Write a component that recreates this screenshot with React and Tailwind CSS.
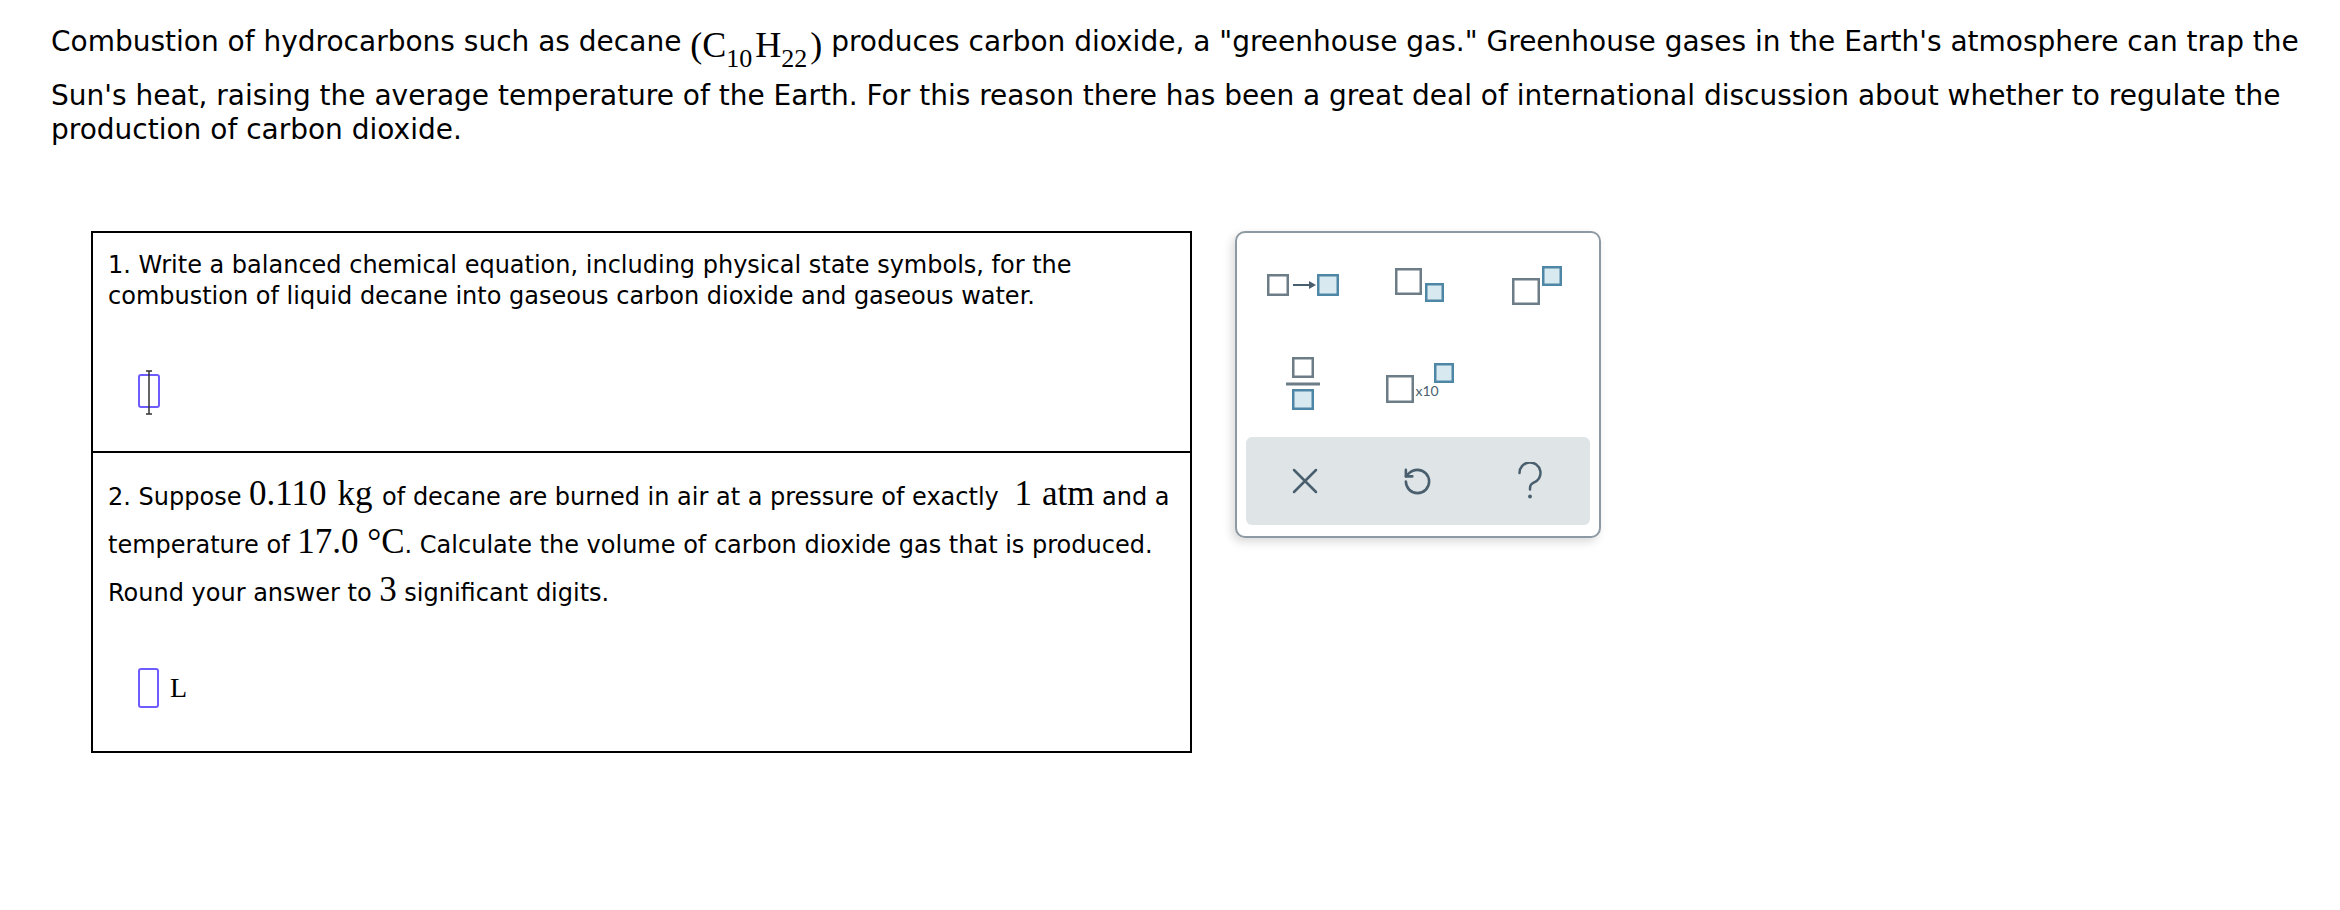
import React from "react"
import { RotateCcw } from "lucide-react"

const sans = { fontFamily: '"DejaVu Sans", Verdana, sans-serif' }

function M({ children, className = "" }) {
    return (
        <span className={"font-['Liberation_Serif',serif] text-[35px] leading-none " + className}>{children}</span>
    )
}

function Sq({ x, y, w, h, blue }) {
    return (
        <rect
            x={x + 1.25}
            y={y + 1.25}
            width={w - 2.5}
            height={h - 2.5}
            fill={blue ? "#d8e9f0" : "none"}
            stroke={blue ? "#4e86a6" : "#6c7d88"}
            strokeWidth="2.5"
        />
    )
}

function ArrowIcon() {
    return (
        <svg width="72" height="22" viewBox="0 0 72 22">
            <Sq x={0} y={0} w={22} h={22} />
            <line x1="26" y1="11" x2="43" y2="11" stroke="#4a5f6e" strokeWidth="2" />
            <path d="M42 7 L49 11 L42 15 Z" fill="#4a5f6e" />
            <Sq x={50} y={0} w={22} h={22} blue />
        </svg>
    )
}

function SubIcon() {
    return (
        <svg width="49" height="34" viewBox="0 0 49 34">
            <Sq x={0} y={0} w={27} h={27} />
            <Sq x={30} y={15} w={19} h={19} blue />
        </svg>
    )
}

function SupIcon() {
    return (
        <svg width="50" height="39" viewBox="0 0 50 39">
            <Sq x={0} y={12} w={28} h={27} />
            <Sq x={30} y={0} w={20} h={20} blue />
        </svg>
    )
}

function FracIcon() {
    return (
        <svg width="34" height="53" viewBox="0 0 34 53">
            <Sq x={6} y={0} w={22} h={21} />
            <line x1="0" y1="27" x2="34" y2="27" stroke="#6c7d88" strokeWidth="3" />
            <Sq x={6} y={32} w={22} h={21} blue />
        </svg>
    )
}

function SciIcon() {
    return (
        <div className="relative w-[68px] h-[40px]">
            <svg width="68" height="40" viewBox="0 0 68 40">
                <Sq x={0} y={12} w={28} h={28} />
                <Sq x={48} y={0} w={20} h={20} blue />
            </svg>
            <span className="absolute left-[30px] top-[21px] text-[14px] leading-none text-[#4a5f6e] font-['Lato',sans-serif]">
                x10
            </span>
        </div>
    )
}

function CloseIcon() {
    return (
        <svg width="26" height="26" viewBox="0 0 26 26">
            <path d="M2 2 L24 24 M24 2 L2 24" stroke="#4a5f6e" strokeWidth="2.5" strokeLinecap="round" />
        </svg>
    )
}

function HelpIcon() {
    return (
        <svg width="26" height="38" viewBox="0 0 26 38">
            <path
                d="M2.5 11 A10.5 10.5 0 1 1 16 21 Q13 22.5 13 26 V27.5"
                fill="none"
                stroke="#4a5f6e"
                strokeWidth="2.5"
                strokeLinecap="round"
            />
            <circle cx="13" cy="34.5" r="1.9" fill="#4a5f6e" />
        </svg>
    )
}

function Palette() {
    return (
        <div className="ml-[43px] w-[366px] rounded-[10px] border-2 border-[#8e9aa3] bg-white pt-[3px] px-[9px] pb-[11px] shadow-[-3px_4px_10px_rgba(0,0,0,0.15)]">
            <div className="grid grid-cols-[117px_117px_117px] -ml-[2px]">
                <div className="h-[98px] flex items-center justify-center"><ArrowIcon /></div>
                <div className="h-[98px] flex items-center justify-center"><SubIcon /></div>
                <div className="h-[98px] flex items-center justify-center"><SupIcon /></div>
                <div className="h-[98px] flex items-center justify-center"><FracIcon /></div>
                <div className="h-[98px] flex items-center justify-center"><SciIcon /></div>
                <div className="h-[98px]" />
            </div>
            <div className="mt-[5px] h-[88px] rounded-[6px] bg-[#dfe4e7] grid grid-cols-3 items-center">
                <div className="flex justify-center pl-[3px]"><CloseIcon /></div>
                <div className="flex justify-center"><RotateCcw size={31} strokeWidth={2} color="#4a5f6e" /></div>
                <div className="flex justify-center pr-[6px]"><HelpIcon /></div>
            </div>
        </div>
    )
}

export default function App() {
    return (
        <div className="bg-white text-black w-[2340px] min-h-[910px] pl-[51px] pr-[10px]" style={sans}>
            <p className="pt-[25px] text-[28px] leading-[34px] whitespace-nowrap">
                Combustion of hydrocarbons such as decane{" "}
                <span className="inline-block align-[-6px] leading-[35px] pb-[16px] text-[36px] font-['Liberation_Serif',serif]">
                    (C<sub className="text-[26px] -bottom-[10px] mr-[3px]">10</sub>H<sub className="text-[26px] -bottom-[10px] mr-[3px]">22</sub>)
                </span>{" "}
                produces carbon dioxide, a "greenhouse gas." Greenhouse gases in the Earth's atmosphere can trap the
                <br />
                Sun's heat, raising the average temperature of the Earth. For this reason there has been a great deal of
                international discussion about whether to regulate the
                <br />
                production of carbon dioxide.
            </p>

            <div className="mt-[84px] flex items-start">
                <div className="ml-[40px] w-[1101px] border-2 border-black">
                    <div className="h-[218px] pl-[15px] pt-[17px] text-[24px] leading-[31px]">
                        <p className="whitespace-nowrap">
                            1. Write a balanced chemical equation, including physical state symbols, for the
                            <br />
                            combustion of liquid decane into gaseous carbon dioxide and gaseous water.
                        </p>
                        <div className="mt-[62px] ml-[30px] relative w-[22px] h-[34px] rounded-[3px] border-2 border-[#6e5cff]">
                            <svg className="absolute left-[4px] -top-[6px]" width="10" height="45" viewBox="0 0 10 45">
                                <path d="M2 1 L8 1 M5 1 L5 44 M2 44 L8 44" stroke="#333" strokeWidth="1.5" />
                            </svg>
                        </div>
                    </div>
                    <div className="border-t-2 border-black h-[300px] pl-[15px] pt-[20px] text-[24px] leading-[48px]">
                        <p className="whitespace-nowrap">
                            2. Suppose <M className="mr-[2px]">0.110<span className="ml-[11px]">kg</span></M> of decane
                            are burned in air at a pressure of exactly{" "}
                            <M className="ml-[8px]">1<span className="ml-[10px]">atm</span></M> and a
                            <br />
                            temperature of <M>17.0&nbsp;°C</M>. Calculate the volume of carbon dioxide gas that is
                            produced.
                            <br />
                            Round your answer to <M>3</M> significant digits.
                        </p>
                        <div className="mt-[51px] ml-[30px] flex items-center">
                            <div className="w-[21px] h-[40px] rounded-[3px] border-2 border-[#6e5cff]" />
                            <M className="ml-[11px] !text-[28px]">L</M>
                        </div>
                    </div>
                </div>
                <Palette />
            </div>
        </div>
    )
}
